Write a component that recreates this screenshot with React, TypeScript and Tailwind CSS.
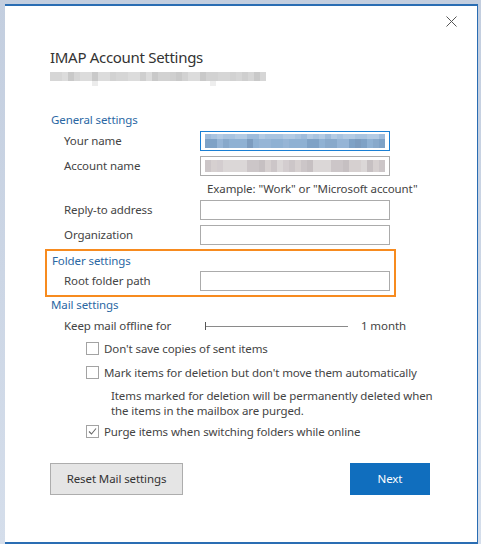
import React from "react"

const font = { fontFamily: '"Noto Sans", "Open Sans", sans-serif' }

// pseudo random mosaic (the screenshot hides personal data this way)
function rand(seed: number) {
  let s = seed
  return () => {
    s = (s * 16807) % 2147483647
    return s / 2147483647
  }
}

function Mosaic({
  cols,
  rows,
  seed,
  palette,
  size,
  rowHeight,
}: {
  cols: number
  rows: number
  seed: number
  palette: string[]
  size: number
  rowHeight: number
}) {
  const r = rand(seed)
  r()
  r()
  const rects: React.ReactNode[] = []
  for (let y = 0; y < rows; y++) {
    for (let x = 0; x < cols; x++) {
      const c = palette[Math.floor(r() * palette.length)]
      rects.push(<rect key={y + "-" + x} x={x * size} y={y * rowHeight} width={size} height={rowHeight} fill={c} />)
    }
  }
  return (
    <svg width={cols * size} height={rows * rowHeight} shapeRendering="crispEdges" className="block shrink-0">
      {rects}
    </svg>
  )
}

function TextInput({ focused, children }: { focused?: boolean; children?: React.ReactNode }) {
  return (
    <div
      className={
        "w-[190px] h-[20px] bg-white border flex items-center px-[4px] overflow-hidden " +
        (focused ? "border-[#1a7fd4]" : "border-[#ababab]")
      }
    >
      {children}
    </div>
  )
}

function Row({ label, children }: { label: string; children?: React.ReactNode }) {
  return (
    <div className="flex items-center">
      <span className="w-[150px] pl-[14px] text-[11.5px] tracking-[-0.1px] text-[#444]">{label}</span>
      {children}
    </div>
  )
}

function Heading({ children }: { children: React.ReactNode }) {
  return <div className="pl-[1px] text-[11.5px] tracking-[-0.1px] text-[#2a67a3] leading-[16px]">{children}</div>
}

function Checkbox({ checked, label }: { checked?: boolean; label: string }) {
  return (
    <div className="flex items-center pl-[36px]">
      <div className="w-[13px] h-[13px] border border-[#a3a3a3] bg-white flex items-center justify-center">
        {checked && (
          <svg width="9" height="9" viewBox="0 0 9 9">
            <path d="M1 4.5 L3.5 7 L8 1.5" fill="none" stroke="#6a6a6a" strokeWidth="1.1" />
          </svg>
        )}
      </div>
      <span className="ml-[5px] text-[11.5px] tracking-[-0.1px] text-[#444]">{label}</span>
    </div>
  )
}

export default function App() {
  return (
    <div className="w-[481px] h-[544px] bg-gradient-to-b from-[#c3cedf] to-[#d5deeb] pt-[4px] pl-[5px]" style={font}>
      <div className="w-[473px] h-[540px] bg-white border-t-2 border-r border-b-2 border-[#2a6db3] flex flex-col">
        <div className="flex justify-end pt-[10px] pr-[20px]">
          <svg width="11" height="11" viewBox="0 0 11 11">
            <path d="M0.5 0.5 L10.5 10.5 M10.5 0.5 L0.5 10.5" stroke="#555" strokeWidth="1" />
          </svg>
        </div>

        <div className="pl-[45px] flex flex-col">
          <div className="mt-[20px] text-[15px] tracking-[-0.3px] text-[#333] leading-[20px]">IMAP Account Settings</div>
          <div className="mt-[5px] flex flex-col">
            <Mosaic cols={36} rows={1} seed={7} palette={["#cfcfcf", "#d6d6d6", "#c9c9c9", "#dcdcdc", "#d2d2d2"]} size={6} rowHeight={9} />
            <div className="flex">
              <div className="w-[42px]" />
              <div className="w-[6px] h-[5px] bg-[#ececec]" />
              <div className="w-[112px]" />
              <div className="w-[6px] h-[5px] bg-[#eeeeee]" />
            </div>
          </div>

          <div className="mt-[26px]">
            <Heading>General settings</Heading>
          </div>
          <div className="mt-[3px] flex flex-col gap-[5px]">
            <Row label="Your name">
              <TextInput focused>
                <div className="flex flex-col">
                  <Mosaic cols={30} rows={1} seed={5} palette={["#a9c4e0", "#b3cbe4", "#9fbcdb"]} size={6} rowHeight={5} />
                  <Mosaic cols={30} rows={1} seed={3} palette={["#8fb1d3", "#7fa2c6", "#96b5d6", "#88a9cb", "#7c9cbf"]} size={6} rowHeight={9} />
                </div>
              </TextInput>
            </Row>
            <Row label="Account name">
              <TextInput>
                <Mosaic cols={30} rows={1} seed={11} palette={["#d6d0d0", "#ccc6c8", "#dbd7d7", "#c6c0c2", "#d3cdcf"]} size={6} rowHeight={12} />
              </TextInput>
            </Row>
          </div>
          <div className="pl-[157px] mt-[4px] text-[11.5px] tracking-[-0.1px] text-[#444] leading-[18px]">
            Example: "Work" or "Microsoft account"
          </div>
          <div className="mt-[2px] flex flex-col gap-[5px]">
            <Row label="Reply-to address">
              <TextInput />
            </Row>
            <Row label="Organization">
              <TextInput />
            </Row>
          </div>

          <div className="mt-[4px] -ml-[5px] w-[351px] border-2 border-[#f78b1f] pl-[4px] pt-[2px] pb-[4px]">
            <Heading>Folder settings</Heading>
            <div className="mt-[2px] flex items-center">
              <span className="w-[149px] pl-[13px] text-[11.5px] tracking-[-0.1px] text-[#444]">Root folder path</span>
              <TextInput />
            </div>
          </div>

          <div className="mt-[0px]">
            <Heading>Mail settings</Heading>
          </div>
          <div className="mt-[4px] flex items-center h-[18px]">
            <span className="w-[155px] pl-[14px] text-[11.5px] tracking-[-0.1px] text-[#444]">Keep mail offline for</span>
            <div className="w-[143px] h-[8px] flex items-center">
              <div className="w-[1px] h-[8px] bg-[#555]" />
              <div className="flex-1 h-[1px] bg-[#8a8a8a]" />
            </div>
            <span className="ml-[13px] text-[11.5px] tracking-[-0.1px] text-[#444]">1 month</span>
          </div>

          <div className="mt-[5px] flex flex-col">
            <Checkbox label="Don't save copies of sent items" />
            <div className="mt-[7px]">
              <Checkbox label="Mark items for deletion but don't move them automatically" />
            </div>
            <div className="mt-[6px] ml-[61px] w-[326px] text-[11.5px] tracking-[-0.1px] text-[#444] leading-[15px]">
              Items marked for deletion will be permanently deleted when the items in the mailbox are purged.
            </div>
            <div className="mt-[5px]">
              <Checkbox checked label="Purge items when switching folders while online" />
            </div>
          </div>

          <div className="mt-[23px] flex items-center">
            <button className="w-[133px] h-[32px] bg-[#e5e5e5] border border-[#adadad] text-[11.5px] tracking-[-0.1px] text-[#333]">
              Reset Mail settings
            </button>
            <button className="ml-[167px] w-[80px] h-[32px] bg-[#106ebe] text-[11.5px] tracking-[-0.1px] text-white">Next</button>
          </div>
        </div>
      </div>
    </div>
  )
}
